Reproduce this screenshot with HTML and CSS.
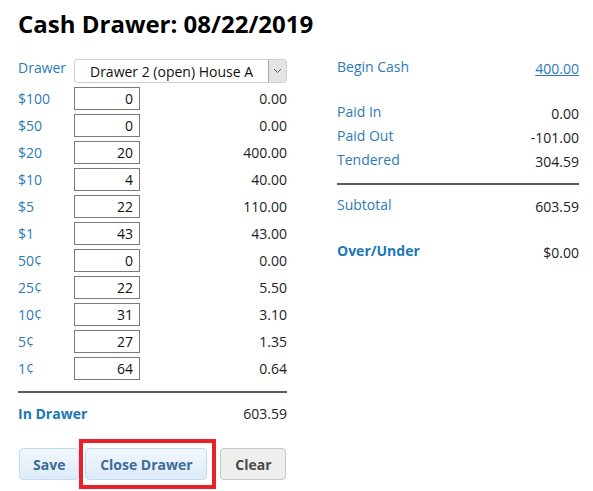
FILE: index.html
```html
<!DOCTYPE html>
<html lang="en">
<head>
    <meta charset="UTF-8">
    <title>Cash Drawer</title>
    <link rel="stylesheet" href="styles.css">
</head>
<body>
    <h1>Cash Drawer: 08/22/2019</h1>
    <div class="drawer-page">
        <div class="count-col">
            <div class="count-grid">
                <label class="field-label drawer-label" for="drawer">Drawer</label>
                <div class="select-box">
                    <select id="drawer">
                        <option>Drawer 2 (open) House A</option>
                    </select>
                    <span class="select-arrow">
                        <svg width="9" height="6" viewBox="0 0 9 6"><path d="M1 1 L4.5 4.5 L8 1" fill="none" stroke="#555" stroke-width="1"/></svg>
                    </span>
                </div>

                <span class="field-label">$100</span><input class="qty" type="text" value="0"><span class="amount">0.00</span>
                <span class="field-label">$50</span><input class="qty" type="text" value="0"><span class="amount">0.00</span>
                <span class="field-label">$20</span><input class="qty" type="text" value="20"><span class="amount">400.00</span>
                <span class="field-label">$10</span><input class="qty" type="text" value="4"><span class="amount">40.00</span>
                <span class="field-label">$5</span><input class="qty" type="text" value="22"><span class="amount">110.00</span>
                <span class="field-label">$1</span><input class="qty" type="text" value="43"><span class="amount">43.00</span>
                <span class="field-label">50¢</span><input class="qty" type="text" value="0"><span class="amount">0.00</span>
                <span class="field-label">25¢</span><input class="qty" type="text" value="22"><span class="amount">5.50</span>
                <span class="field-label">10¢</span><input class="qty" type="text" value="31"><span class="amount">3.10</span>
                <span class="field-label">5¢</span><input class="qty" type="text" value="27"><span class="amount">1.35</span>
                <span class="field-label">1¢</span><input class="qty" type="text" value="64"><span class="amount">0.64</span>
            </div>
            <hr class="rule">
            <div class="total-row">
                <span class="field-label strong">In Drawer</span>
                <span class="amount">603.59</span>
            </div>
            <div class="actions">
                <button class="btn btn-blue">Save</button>
                <span class="highlight"><button class="btn btn-blue btn-close">Close Drawer</button></span>
                <button class="btn btn-gray">Clear</button>
            </div>
        </div>

        <div class="summary-col">
            <div class="sum-row">
                <span class="field-label">Begin Cash</span>
                <a class="amount-link" href="#">400.00</a>
            </div>
            <div class="sum-group">
                <div class="sum-row"><span class="field-label">Paid In</span><span class="amount">0.00</span></div>
                <div class="sum-row"><span class="field-label">Paid Out</span><span class="amount">-101.00</span></div>
                <div class="sum-row"><span class="field-label">Tendered</span><span class="amount">304.59</span></div>
            </div>
            <hr class="rule rule-right">
            <div class="sum-row"><span class="field-label">Subtotal</span><span class="amount">603.59</span></div>
            <div class="sum-row over-under"><span class="field-label strong">Over/Under</span><span class="amount">$0.00</span></div>
        </div>
    </div>
</body>
</html>
```

FILE: styles.css
```css
html {
    background-color: white;
}
body {
    font-family: "Open Sans", "Noto Sans", sans-serif;
    font-size: 14px;
    color: #222;
    margin: 0;
    padding: 8px 0 10px 18px;
    min-height: 491px;
    box-sizing: border-box;
}
h1 {
    font-size: 24px;
    font-weight: 700;
    line-height: 32px;
    margin: 0;
    color: #000;
}
.drawer-page {
    display: flex;
    gap: 50px;
    margin-top: 15px;
}
.count-col {
    width: 269px;
    flex-shrink: 0;
    padding-top: 4px;
}
.count-grid {
    display: grid;
    grid-template-columns: 56px 66px 1fr;
    grid-auto-rows: 23px;
    grid-template-rows: 24px;
    row-gap: 4px;
    align-items: center;
}
.field-label {
    color: #2d7bb6;
    line-height: 20px;
}
.strong {
    font-weight: 700;
    color: #1a78b5;
}
.drawer-label {
    align-self: start;
    margin-top: -1px;
}
.select-box {
    grid-column: 2 / 4;
    display: flex;
    height: 24px;
    box-sizing: border-box;
    border: 1px solid #cfcfcf;
    border-radius: 3px;
    background-color: white;
}
.select-box select {
    flex: 1;
    appearance: none;
    -webkit-appearance: none;
    border: none;
    background: transparent;
    font-family: inherit;
    font-size: 14px;
    color: #111;
    text-align: center;
    text-align-last: center;
    padding: 0;
    outline: none;
}
.select-arrow {
    width: 17px;
    display: flex;
    align-items: center;
    justify-content: center;
    background-color: #e4e4e4;
    border-left: 1px solid #a9a9a9;
    border-radius: 0 2px 2px 0;
}
.qty {
    width: 66px;
    height: 23px;
    box-sizing: border-box;
    border: 1px solid #7a7a7a;
    padding: 0 6px 0 0;
    text-align: right;
    font-family: inherit;
    font-size: 14px;
    color: #111;
}
.amount {
    text-align: right;
    color: #222;
}
.rule {
    border: none;
    border-top: 2px solid #5a5a5a;
    margin: 11px 0 0 0;
}
.total-row {
    display: flex;
    justify-content: space-between;
    margin-top: 11px;
    line-height: 20px;
}
.actions {
    display: flex;
    align-items: center;
    margin-top: 24px;
    margin-left: 1px;
}
.btn {
    height: 32px;
    box-sizing: border-box;
    border-radius: 4px;
    font-family: inherit;
    font-size: 14px;
    font-weight: 700;
    padding: 0 13px;
    cursor: pointer;
}
.btn-blue {
    color: #3c6c98;
    border: 1px solid #c3daee;
    background: linear-gradient(#f2f8fd, #dcebf8);
}
.btn-close {
    width: 122px;
}
.btn-gray {
    color: #4a4a4a;
    border: 1px solid #c7c7c7;
    background-color: #eeeeee;
    width: 66px;
    margin-left: 13px;
}
.highlight {
    position: relative;
    display: flex;
    margin-left: 6px;
}
.highlight::after {
    content: "";
    position: absolute;
    top: -9px;
    bottom: -9px;
    left: -6px;
    right: -9px;
    border: 4px solid #e8202a;
}
.summary-col {
    width: 242px;
    flex-shrink: 0;
    padding-top: 2px;
}
.sum-row {
    display: flex;
    justify-content: space-between;
    line-height: 24px;
}
.sum-group {
    margin-top: 21px;
}
.amount-link {
    color: #2d7bb6;
    text-decoration: underline;
}
.rule-right {
    margin-top: 9px;
    margin-bottom: 10px;
}
.over-under {
    margin-top: 22px;
}
```
